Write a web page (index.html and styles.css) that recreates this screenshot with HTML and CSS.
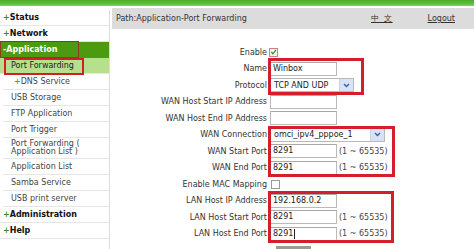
FILE: index.html
```html
<!DOCTYPE html>
<html>
<head>
    <meta charset="utf-8">
    <link rel="stylesheet" href="styles.css">
</head>
<body>
    <div class="topbar"></div>

    <div class="layout">
        <ul class="menu">
            <li class="group"><span class="plus">+</span>Status</li>
            <li class="group"><span class="plus">+</span>Network</li>
            <li class="group open">-Application</li>
            <li class="item active">Port Forwarding</li>
            <li class="item sub"><span class="plus-thin">+</span>DNS Service</li>
            <li class="item">USB Storage</li>
            <li class="item">FTP Application</li>
            <li class="item">Port Trigger</li>
            <li class="item double">Port Forwarding (<br>Application List )</li>
            <li class="item">Application List</li>
            <li class="item">Samba Service</li>
            <li class="item">USB print server</li>
            <li class="group"><span class="plus">+</span>Administration</li>
            <li class="group"><span class="plus">+</span>Help</li>
        </ul>

        <div class="main">
            <div class="path">
                <span class="path-text">Path:Application-Port Forwarding</span>
                <a class="lang" href="#">中 文</a>
                <a class="logout" href="#">Logout</a>
            </div>

            <div class="form">
                <label>Enable</label>
                <div class="ctl"><span class="check on">
                    <svg width="8" height="8" viewBox="0 0 8 8"><path d="M1.5 4 L3.3 6 L6.8 1.6" fill="none" stroke="#2f8a2f" stroke-width="1.3"/></svg>
                </span></div>

                <label>Name</label>
                <div class="ctl"><span class="input">Winbox</span></div>

                <label>Protocol</label>
                <div class="ctl"><span class="select proto">TCP AND UDP<span class="arrow">
                    <svg width="7" height="5" viewBox="0 0 7 5"><path d="M1 1 L3.5 3.5 L6 1" fill="none" stroke="#3b5fa8" stroke-width="1.4"/></svg>
                </span></span></div>

                <label>WAN Host Start IP Address</label>
                <div class="ctl"><span class="input"></span></div>

                <label>WAN Host End IP Address</label>
                <div class="ctl"><span class="input"></span></div>

                <label>WAN Connection</label>
                <div class="ctl"><span class="select conn">omci_ipv4_pppoe_1<span class="arrow">
                    <svg width="7" height="5" viewBox="0 0 7 5"><path d="M1 1 L3.5 3.5 L6 1" fill="none" stroke="#3b5fa8" stroke-width="1.4"/></svg>
                </span></span></div>

                <label>WAN Start Port</label>
                <div class="ctl"><span class="input">8291</span><span class="range">(1 ~ 65535)</span></div>

                <label>WAN End Port</label>
                <div class="ctl"><span class="input">8291</span><span class="range">(1 ~ 65535)</span></div>

                <label>Enable MAC Mapping</label>
                <div class="ctl"><span class="check mac"></span></div>

                <label>LAN Host IP Address</label>
                <div class="ctl"><span class="input">192.168.0.2</span></div>

                <label>LAN Host Start Port</label>
                <div class="ctl"><span class="input">8291</span><span class="range">(1 ~ 65535)</span></div>

                <label>LAN Host End Port</label>
                <div class="ctl"><span class="input">8291<span class="caret"></span></span><span class="range">(1 ~ 65535)</span></div>
            </div>

            <div class="actions"><span class="btn"></span></div>
        </div>
    </div>

    <!-- hand drawn marks over the screenshot -->
    <div class="mark mark-app"></div>
    <div class="mark mark-pf"></div>
    <div class="mark mark-proto"></div>
    <div class="mark mark-wan"></div>
    <div class="mark mark-lan"></div>
</body>
</html>
```

FILE: styles.css
```css
body {
    margin: 0;
    font-family: "DejaVu Sans", Verdana, sans-serif;
    font-size: 8px;
    color: #333;
    background: #fff;
    overflow: hidden;
}

.topbar {
    height: 6px;
    background: linear-gradient(#4fae25, #62c03a 70%, #8fd46a);
    margin-bottom: 2px;
}

.layout {
    display: flex;
}

/* left menu */
.menu {
    width: 109px;
    margin: 2px 0 0;
    padding: 0;
    list-style: none;
    border-right: 1px solid #dcdcdc;
    height: 241px;
}

.menu li {
    height: 16px;
    line-height: 16px;
    border-bottom: 1px solid #e6e6e6;
    box-sizing: border-box;
    white-space: nowrap;
}

.menu .group {
    font-weight: bold;
    color: #111;
    padding-left: 3px;
}

.menu .plus {
    color: #3d8a1e;
}

.menu .open {
    background: #4b9a10;
    color: #fff;
    border-bottom: none;
}

.menu .item {
    padding-left: 11px;
    color: #444;
    margin-left: 3px;
    padding-left: 8px;
}

.menu .active {
    background: #b6df8e;
    margin-left: 0;
    padding-left: 11px;
    color: #222;
}

.menu .sub {
    padding-left: 11px;
}

.menu .plus-thin {
    color: #3d8a1e;
}

.menu .double {
    height: 21px;
    line-height: 8px;
    padding-top: 2px;
}

/* main area */
.main {
    flex: 1;
    margin-left: 2px;
}

.path {
    height: 21px;
    background: #dcdcdc;
    display: flex;
    align-items: center;
    padding-left: 4px;
    color: #333;
}

.path-text {
    flex: 1;
}

.path a {
    color: #333;
}

.lang {
    margin-right: 35px;
    letter-spacing: 1px;
}

.logout {
    margin-right: 19px;
}

.form {
    display: grid;
    grid-template-columns: 155px 1fr;
    grid-auto-rows: 16.5px;
    column-gap: 3px;
    margin-top: 15px;
}

.form label {
    text-align: right;
    align-self: center;
    white-space: nowrap;
    color: #333;
}

.ctl {
    display: flex;
    align-items: center;
}

.input {
    width: 67px;
    height: 14px;
    box-sizing: border-box;
    border: 1px solid #b9b9b9;
    border-top-color: #a8a8a8;
    padding-left: 2px;
    line-height: 12px;
    color: #222;
    display: flex;
    align-items: center;
}

.caret {
    width: 1px;
    height: 10px;
    background: #222;
    margin-left: 1px;
}

.range {
    margin-left: 2px;
    color: #444;
}

.select {
    height: 14px;
    box-sizing: border-box;
    border: 1px solid #b9b9b9;
    display: flex;
    align-items: center;
    justify-content: space-between;
    padding-left: 3px;
    color: #222;
}

.select.proto {
    width: 84px;
}

.select.conn {
    width: 115px;
}

.arrow {
    width: 13px;
    height: 12px;
    background: #d9e3f5;
    border-left: 1px solid #c5d2ea;
    display: flex;
    align-items: center;
    justify-content: center;
}

.check {
    width: 9px;
    height: 9px;
    box-sizing: border-box;
    border: 1px solid #999;
    background: #fff;
    display: flex;
    align-items: center;
    justify-content: center;
}

.check.on {
    border-color: #d77a8a;
    background: #eef6ee;
    margin-left: -1px;
}

.check.mac {
    margin-left: 1px;
}

.actions {
    padding-left: 164px;
    margin-top: 4px;
}

.btn {
    display: block;
    width: 35px;
    height: 12px;
    background: #9a9a9a;
}

/* red marks */
.mark {
    position: absolute;
    box-sizing: border-box;
    border: 3px solid #d21f2b;
}

.mark-app {
    left: 0;
    top: 41px;
    width: 79px;
    height: 17px;
    border: 1px solid #8c3b22;
}

.mark-pf {
    left: 4px;
    top: 58px;
    width: 80px;
    height: 17px;
    border-width: 2px;
}

.mark-proto {
    left: 268px;
    top: 58px;
    width: 96px;
    height: 37px;
}

.mark-wan {
    left: 268px;
    top: 126px;
    width: 127px;
    height: 51px;
}

.mark-lan {
    left: 268px;
    top: 191px;
    width: 126px;
    height: 52px;
}
```
